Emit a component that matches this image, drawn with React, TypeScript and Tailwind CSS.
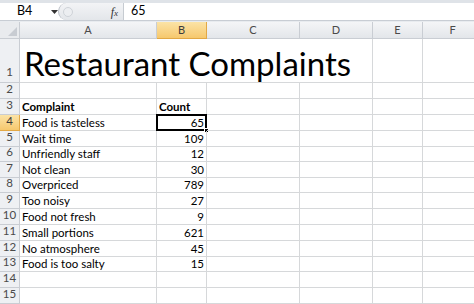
const columns = [
  { name: "A", width: 137 },
  { name: "B", width: 50 },
  { name: "C", width: 93 },
  { name: "D", width: 73 },
  { name: "E", width: 50 },
  { name: "F", width: 60 },
];

const complaints: [string, number][] = [
  ["Food is tasteless", 65],
  ["Wait time", 109],
  ["Unfriendly staff", 12],
  ["Not clean", 30],
  ["Overpriced", 789],
  ["Too noisy", 27],
  ["Food not fresh", 9],
  ["Small portions", 621],
  ["No atmosphere", 45],
  ["Food is too salty", 15],
];

// row heights for rows 2..15
const heights = [16, 16, 16, 16, 15, 16, 15, 16, 16, 16, 16, 15, 16, 16];

const font = { fontFamily: "Lato, 'Open Sans', sans-serif" };

function RowHeader({ n, h, active }: { n: number; h: number; active?: boolean }) {
  return (
    <div
      className={
        "w-[20px] shrink-0 flex items-end justify-center pb-px text-[11.5px] border-r border-b " +
        (active
          ? "bg-gradient-to-b from-[#fbe3a6] to-[#f6c86d] border-[#e2a845] text-[#3b3b3b]"
          : "bg-[#eef0f3] border-[#c9cdd3] text-[#4a4a4a]")
      }
      style={{ height: h }}
    >
      {n}
    </div>
  );
}

function Row({
  n,
  h,
  a,
  b,
  bold,
  active,
}: {
  n: number;
  h: number;
  a?: string;
  b?: string | number;
  bold?: boolean;
  active?: boolean;
}) {
  return (
    <div className="flex">
      <RowHeader n={n} h={h} active={active} />
      {columns.map((c, i) => (
        <div
          key={c.name}
          className={
            "shrink-0 border-r border-b border-[#d6d8da] text-[11.5px] text-black leading-none flex items-end pb-[2px] px-[2px] relative " +
            (i === 1 && !bold ? "justify-end" : "") +
            (bold ? " font-bold" : "")
          }
          style={{ width: c.width, height: h }}
        >
          {i === 0 && a}
          {i === 1 && b}
          {i === 1 && active && (
            <>
              <div className="absolute -left-px -top-px w-[51px] h-[17px] border-2 border-black pointer-events-none" />
              <div className="absolute -right-[3px] -bottom-[3px] w-[5px] h-[5px] bg-black border border-white" />
            </>
          )}
        </div>
      ))}
    </div>
  );
}

export default function App() {
  return (
    <div className="w-[474px] h-[304px] overflow-hidden bg-white" style={font}>
      {/* formula bar */}
      <div className="h-[3px] bg-[#dfe3e8]" />
      <div className="flex h-[17px] items-center bg-white">
        <div className="w-[50px] pl-[17px] text-[12.5px] text-black">B4</div>
        <div className="w-[8px] flex justify-center">
          <svg width="7" height="4" viewBox="0 0 7 4">
            <path d="M0 0h7L3.5 4z" fill="#333" />
          </svg>
        </div>
        <div className="h-full w-[65px] bg-gradient-to-b from-[#f3f4f6] to-[#e3e6ea] rounded-l-full border-l border-[#b9bec6] flex items-center justify-between pl-[4px] pr-[5px]">
          <div className="w-[10px] h-[10px] rounded-full border border-[#cfd3d8] bg-[#eceef1]" />
          <span className="italic text-[12px] text-[#333]" style={{ fontFamily: "'Liberation Serif', serif" }}>
            f<span className="text-[9px]">x</span>
          </span>
        </div>
        <div className="h-full border-l border-[#c6cbd1] pl-[7px] flex items-center text-[12.5px] text-black">
          65
        </div>
      </div>
      <div className="h-[2px] bg-[#c8cdd4] border-b border-[#e8ebef]" />

      {/* column headers */}
      <div className="flex h-[17px]">
        <div className="w-[20px] shrink-0 bg-[#e9ebee] border-r border-b border-[#c9cdd3] relative">
          <svg className="absolute right-[2px] bottom-[2px]" width="9" height="9" viewBox="0 0 9 9">
            <path d="M9 0v9H0z" fill="#c8ccd2" />
          </svg>
        </div>
        {columns.map((c, i) => (
          <div
            key={c.name}
            className={
              "shrink-0 flex items-center justify-center text-[11px] border-r border-b " +
              (i === 1
                ? "bg-gradient-to-b from-[#fbe3a6] to-[#f6c86d] border-[#e2a845] text-[#3b3b3b]"
                : "bg-gradient-to-b from-[#f4f5f7] to-[#e3e6ea] border-[#c9cdd3] text-[#4a4a4a]")
            }
            style={{ width: c.width }}
          >
            {c.name}
          </div>
        ))}
      </div>

      {/* row 1 title */}
      <div className="flex">
        <div className="w-[20px] h-[44px] shrink-0 flex items-end justify-center pb-[2px] text-[11.5px] bg-[#eef0f3] border-r border-b border-[#c9cdd3] text-[#4a4a4a]">
          1
        </div>
        <div className="relative flex">
          {columns.map((c, i) => (
            <div
              key={c.name}
              className={"shrink-0 h-[44px] border-b border-[#d6d8da] " + (i >= 3 ? "border-r" : "")}
              style={{ width: c.width }}
            />
          ))}
          <div className="absolute left-[4px] bottom-[3px] text-[33px] leading-none text-black whitespace-nowrap">
            Restaurant Complaints
          </div>
        </div>
      </div>

      <Row n={2} h={heights[0]} />
      <Row n={3} h={heights[1]} a="Complaint" b="Count" bold />
      {complaints.map(([a, b], i) => (
        <Row key={a} n={i + 4} h={heights[i + 2]} a={a} b={b} active={i === 0} />
      ))}
      <Row n={14} h={heights[12]} />
      <Row n={15} h={heights[13]} />
    </div>
  );
}
